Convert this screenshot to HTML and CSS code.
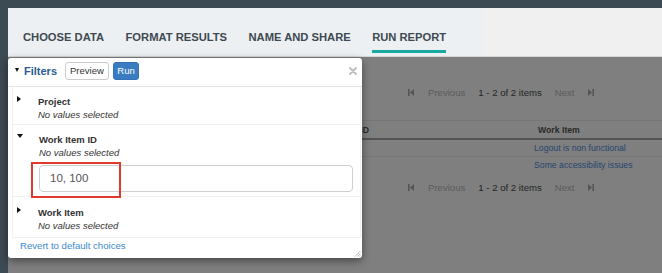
FILE: index.html
```html
<!DOCTYPE html>
<html>
<head>
<meta charset="utf-8">
<link rel="stylesheet" href="styles.css">
</head>
<body>
<div class="app">
  <header class="header">
    <nav class="tabs">
      <div class="tab">CHOOSE DATA</div>
      <div class="tab">FORMAT RESULTS</div>
      <div class="tab">NAME AND SHARE</div>
      <div class="tab active">RUN REPORT</div>
    </nav>
  </header>
  <main class="content">
    <div class="pager pager-top">
      <span class="pg-icon"><svg width="6" height="7" viewBox="0 0 6 7"><rect x="0" y="0" width="1.6" height="7" fill="#aaa"/><path d="M6 0 L2 3.5 L6 7 Z" fill="#aaa"/></svg></span>
      <span class="pg-link">Previous</span>
      <span class="pg-count">1 - 2 of 2 items</span>
      <span class="pg-link">Next</span>
      <span class="pg-icon"><svg width="6" height="7" viewBox="0 0 6 7"><path d="M0 0 L4 3.5 L0 7 Z" fill="#aaa"/><rect x="4.4" y="0" width="1.6" height="7" fill="#aaa"/></svg></span>
    </div>
    <div class="table">
      <div class="trow thead">
        <div class="c1">Work Item ID</div>
        <div class="c2">Work Item</div>
      </div>
      <div class="trow">
        <div class="c1">10</div>
        <div class="c2 link">Logout is non functional</div>
      </div>
      <div class="trow last">
        <div class="c1">100</div>
        <div class="c2 link">Some accessibility issues</div>
      </div>
    </div>
    <div class="pager pager-bottom">
      <span class="pg-icon"><svg width="6" height="7" viewBox="0 0 6 7"><rect x="0" y="0" width="1.6" height="7" fill="#aaa"/><path d="M6 0 L2 3.5 L6 7 Z" fill="#aaa"/></svg></span>
      <span class="pg-link">Previous</span>
      <span class="pg-count">1 - 2 of 2 items</span>
      <span class="pg-link">Next</span>
      <span class="pg-icon"><svg width="6" height="7" viewBox="0 0 6 7"><path d="M0 0 L4 3.5 L0 7 Z" fill="#aaa"/><rect x="4.4" y="0" width="1.6" height="7" fill="#aaa"/></svg></span>
    </div>

    <div class="overlay"></div>

    <section class="popup">
      <div class="popup-head">
        <span class="head-tri"></span>
        <span class="popup-title">Filters</span>
        <button class="btn">Preview</button>
        <button class="btn btn-primary">Run</button>
        <span class="close"><svg width="8" height="8" viewBox="0 0 8 8"><path d="M1 1 L7 7 M7 1 L1 7" stroke="#bdbdbd" stroke-width="1.8" stroke-linecap="round"/></svg></span>
      </div>
      <div class="filters">
        <div class="filter">
          <span class="tri-right"></span>
          <div class="filter-body">
            <div class="filter-name">Project</div>
            <div class="filter-value">No values selected</div>
          </div>
        </div>
        <div class="filter open">
          <span class="tri-down"></span>
          <div class="filter-body">
            <div class="filter-name">Work Item ID</div>
            <div class="filter-value">No values selected</div>
            <div class="input">10, 100</div>
          </div>
        </div>
        <div class="filter third">
          <span class="tri-right"></span>
          <div class="filter-body">
            <div class="filter-name">Work Item</div>
            <div class="filter-value">No values selected</div>
          </div>
        </div>
      </div>
      <div class="popup-foot">
        <span class="revert">Revert to default choices</span>
      </div>
      <span class="grip"><svg width="7" height="7" viewBox="0 0 7 7"><path d="M6.5 1 L1 6.5 M6.5 3.5 L3.5 6.5 M6.5 5.5 L5.5 6.5" stroke="#aaa" stroke-width="0.8"/></svg></span>
    </section>

    <div class="highlight"></div>
  </main>
</div>
</body>
</html>
```

FILE: styles.css
```css
* { box-sizing: border-box; }
html, body {
  margin: 0;
  padding: 0;
}
body {
  width: 662px;
  height: 273px;
  overflow: hidden;
  background: #3c4a53;
  font-family: "Liberation Sans", Arial, sans-serif;
  color: #333;
}
.app {
  margin-left: 8px;
  padding-top: 8px;
  height: 273px;
}
.header {
  height: 49px;
  background: #f0f0f0;
  border-bottom: 1px solid #d6d6d6;
  display: flex;
}
.tabs {
  width: 475px;
  height: 48px;
  background: #edf0f3;
  display: flex;
  gap: 21.5px;
  padding-left: 15px;
}
.tab {
  padding-top: 23px;
  padding-bottom: 6px;
  font-size: 11.2px;
  line-height: 13px;
  font-weight: bold;
  color: #3d4950;
  border-bottom: 3px solid transparent;
  height: 45px;
}
.tab.active {
  border-bottom-color: #17a99f;
}
.content {
  position: relative;
  height: 216px;
  background: #fff;
}
.pager {
  display: flex;
  align-items: center;
  padding-left: 400px;
  font-size: 9.6px;
  line-height: 13px;
}
.pager-top { padding-top: 29px; }
.pager-bottom { padding-top: 7px; }
.pg-icon {
  display: flex;
  align-items: center;
  height: 13px;
}
.pg-icon:first-child { margin-right: 14px; }
.pg-link { color: #b8b8b8; }
.pg-count { color: #4a4a4a; margin: 0 13px; }
.pg-link + .pg-icon { margin-left: 13px; }
.table {
  margin-top: 21px;
  font-size: 8.7px;
  line-height: 13px;
}
.trow {
  display: flex;
  height: 17px;
  border-bottom: 1px solid #f0f0f0;
  padding-top: 2px;
}
.trow.last { border-bottom: none; }
.thead {
  height: 20px;
  border-top: 1px solid #ececec;
  border-bottom: 2px solid #a8a8a8;
  padding-top: 3px;
  font-weight: bold;
  color: #555;
}
.c1 {
  width: 526px;
  padding-left: 308px;
}
.thead .c2 { padding-left: 4px; }
.link { color: #4d8ddb; }
.overlay {
  position: absolute;
  inset: 0;
  background: rgba(0, 0, 0, 0.5);
}
.popup {
  position: absolute;
  left: 0;
  top: 1px;
  width: 354px;
  background: #fff;
  border-radius: 3px;
  box-shadow: 0 3px 8px rgba(0, 0, 0, 0.45);
}
.popup-head {
  height: 29px;
  display: flex;
  align-items: flex-start;
  padding: 4px 0 0 7px;
  border-bottom: 1px solid #e4e4e4;
  line-height: 18px;
  font-size: 11px;
}
.head-tri {
  width: 0;
  height: 0;
  border-left: 2.5px solid transparent;
  border-right: 2.5px solid transparent;
  border-top: 4px solid #111;
  margin: 6px 5px 0 0;
}
.popup-title {
  font-weight: bold;
  color: #2c5d92;
  margin-right: 8px;
}
.btn {
  font-family: "Liberation Sans", Arial, sans-serif;
  font-size: 9.5px;
  height: 18px;
  line-height: 16px;
  padding: 0 4px;
  border: 1px solid #cccccc;
  border-radius: 3px;
  background: #fff;
  color: #333;
  margin-right: 4px;
}
.btn-primary {
  background: #3a7cc0;
  border-color: #3572b2;
  color: #fff;
  padding: 0 3.5px;
}
.close {
  margin-left: auto;
  margin-right: 5px;
  margin-top: 5px;
  display: flex;
}
.filters {
  padding: 0 1px 0 4px;
}
.filter {
  display: flex;
  align-items: flex-start;
  border: 1px solid #f1f1f1;
  border-top: none;
  padding: 8px 0 3px 0;
}
.filter.open { padding-bottom: 4px; }
.filter.third { padding-top: 9px; padding-bottom: 5px; }
.tri-right {
  width: 0;
  height: 0;
  border-top: 3px solid transparent;
  border-bottom: 3px solid transparent;
  border-left: 4.5px solid #111;
  margin: 1px 17px 0 4px;
}
.tri-down {
  width: 0;
  height: 0;
  border-left: 3px solid transparent;
  border-right: 3px solid transparent;
  border-top: 4px solid #111;
  margin: 1px 16px 0 4px;
}
.filter-body {
  flex: 1;
  font-size: 9.5px;
  line-height: 13px;
  padding-right: 7px;
}
.filter-name { font-weight: bold; color: #333; }
.filter-value { font-style: italic; color: #333; }
.input {
  margin-top: 6px;
  height: 27px;
  border: 1px solid #cfcfcf;
  border-radius: 4px;
  padding-left: 10px;
  font-size: 11.5px;
  line-height: 25px;
  color: #555;
}
.popup-foot {
  height: 20px;
  padding: 1px 0 0 12px;
  font-size: 9.6px;
  line-height: 13px;
}
.revert { color: #3d89cc; }
.grip {
  position: absolute;
  right: 1px;
  bottom: 1px;
  display: flex;
}
.highlight {
  position: absolute;
  left: 23px;
  top: 105px;
  width: 90px;
  height: 36px;
  border: 2px solid #e2392d;
}
```
